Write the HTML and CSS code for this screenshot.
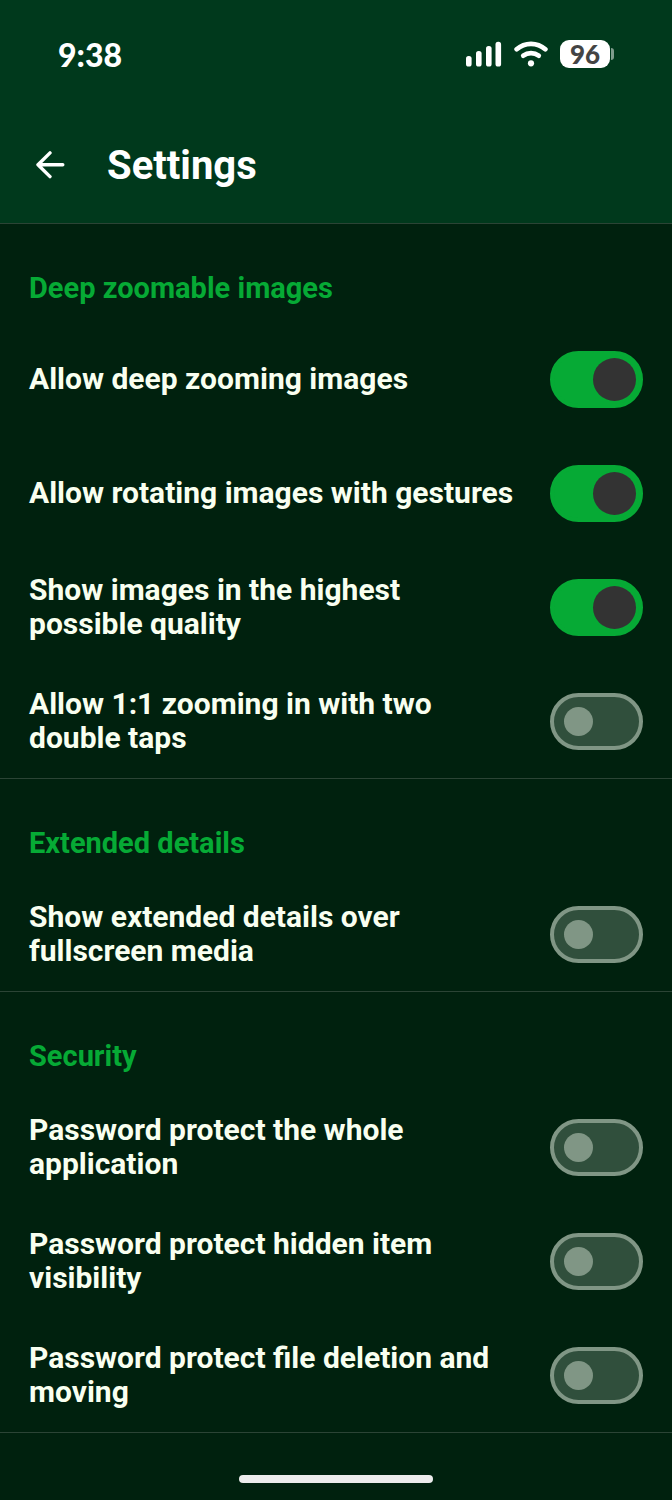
FILE: index.html
```
<!DOCTYPE html>
<html lang="en">
<head>
    <meta charset="UTF-8">
    <meta name="viewport" content="width=device-width, initial-scale=1.0">
    <title>Settings</title>
    <link rel="stylesheet" href="styles.css">
</head>
<body>
    <header class="header">
        <div class="status-bar">
            <span class="time">9:38</span>
            <div class="status-icons">
                <svg class="signal" width="36" height="26" viewBox="0 0 36 26" fill="#fff">
                    <rect x="0" y="15" width="5.6" height="10.5" rx="2.6"/>
                    <rect x="10" y="10" width="5.6" height="15.5" rx="2.6"/>
                    <rect x="20" y="5" width="5.6" height="20.5" rx="2.6"/>
                    <rect x="29.5" y="0.8" width="5.6" height="24.7" rx="2.6"/>
                </svg>
                <svg class="wifi" width="34" height="26" viewBox="0 0 34 26" fill="none" stroke="#fff" stroke-width="4.8" stroke-linecap="round">
                    <path d="M2.7 8.2C10.8 1 23.2 1 31.3 8.2"/>
                    <path d="M9.3 14.7c4.5-3.4 10.9-3.4 15.4 0"/>
                    <circle cx="17" cy="22.3" r="3.1" fill="#fff" stroke="none"/>
                </svg>
                <div class="battery">
                    <span class="battery-level">96</span>
                    <span class="battery-tip"></span>
                </div>
            </div>
        </div>
        <div class="toolbar">
            <button class="back-btn" aria-label="Back">
                <svg width="30" height="30" viewBox="0 0 30 30" fill="none" stroke="#fff" stroke-width="3.4" stroke-linecap="round" stroke-linejoin="round">
                    <path d="M15 1.9L3 13.7l12 11.9M3 13.7h24.8"/>
                </svg>
            </button>
            <h1>Settings</h1>
        </div>
    </header>

    <main>
        <section class="section">
            <h2>Deep zoomable images</h2>
            <div class="row">
                <label for="deep-zoom">Allow deep zooming images</label>
                <input type="checkbox" class="switch" id="deep-zoom" checked>
            </div>
            <div class="row">
                <label for="rotate">Allow rotating images with gestures</label>
                <input type="checkbox" class="switch" id="rotate" checked>
            </div>
            <div class="row">
                <label for="quality">Show images in the highest<br>possible quality</label>
                <input type="checkbox" class="switch" id="quality" checked>
            </div>
            <div class="row">
                <label for="one-to-one">Allow 1:1 zooming in with two<br>double taps</label>
                <input type="checkbox" class="switch" id="one-to-one">
            </div>
        </section>

        <section class="section">
            <h2>Extended details</h2>
            <div class="row">
                <label for="extended">Show extended details over<br>fullscreen media</label>
                <input type="checkbox" class="switch" id="extended">
            </div>
        </section>

        <section class="section">
            <h2>Security</h2>
            <div class="row">
                <label for="protect-app">Password protect the whole<br>application</label>
                <input type="checkbox" class="switch" id="protect-app">
            </div>
            <div class="row">
                <label for="protect-hidden">Password protect hidden item<br>visibility</label>
                <input type="checkbox" class="switch" id="protect-hidden">
            </div>
            <div class="row">
                <label for="protect-files">Password protect file deletion and<br>moving</label>
                <input type="checkbox" class="switch" id="protect-files">
            </div>
        </section>
    </main>

    <footer class="home-area">
        <div class="home-indicator"></div>
    </footer>
</body>
</html>
```
FILE: styles.css
```
* {
    box-sizing: border-box;
}

body {
    margin: 0;
    min-height: 100vh;
    display: flex;
    flex-direction: column;
    font-family: Roboto, sans-serif;
    background-color: #00210e;
    color: #f9fff0;
}

.header {
    background-color: #00391c;
    border-bottom: 1px solid #2b4435;
    color: #fff;
}

.status-bar {
    display: flex;
    align-items: center;
    justify-content: space-between;
    height: 108px;
    padding: 0 58px;
}

.time {
    font-family: Lato, sans-serif;
    font-size: 32px;
    font-weight: 900;
}

.status-icons {
    display: flex;
    align-items: center;
    gap: 12px;
}

.battery {
    display: flex;
    align-items: center;
    gap: 1px;
}

.battery-level {
    width: 50px;
    height: 28px;
    border-radius: 9px;
    background-color: #fff;
    color: #444;
    font-family: Lato, sans-serif;
    font-size: 26px;
    font-weight: 900;
    line-height: 28px;
    text-align: center;
}

.battery-tip {
    width: 3px;
    height: 12px;
    border-radius: 0 3px 3px 0;
    background-color: #7f9c8d;
}

.toolbar {
    display: flex;
    align-items: center;
    gap: 42px;
    height: 115px;
    padding: 0 35px;
}

.back-btn {
    display: flex;
    padding: 0;
    border: none;
    background: none;
    cursor: pointer;
}

h1 {
    margin: 0;
    font-size: 40px;
    font-weight: 700;
    line-height: 48px;
}

.section {
    padding: 0 29px;
    border-bottom: 1px solid #2b4435;
}

h2 {
    margin: 0;
    padding: 47px 0 17px;
    color: #06aa35;
    font-size: 29px;
    font-weight: 700;
    line-height: 34px;
}

.row {
    display: flex;
    align-items: center;
    justify-content: space-between;
    gap: 28px;
    height: 114px;
}

.row label {
    font-size: 30px;
    font-weight: 700;
    line-height: 34px;
}

.switch {
    appearance: none;
    display: flex;
    align-items: center;
    flex-shrink: 0;
    width: 93px;
    height: 57px;
    margin: 0;
    padding: 0 10px;
    border: 4px solid #809685;
    border-radius: 29px;
    background-color: #304f3c;
    cursor: pointer;
}

.switch::before {
    content: "";
    width: 29px;
    height: 29px;
    border-radius: 50%;
    background-color: #809685;
}

.switch:checked {
    justify-content: flex-end;
    padding: 0 3px;
    border-color: #06aa35;
    background-color: #06aa35;
}

.switch:checked::before {
    width: 43px;
    height: 43px;
    background-color: #333;
}

.home-area {
    display: flex;
    justify-content: center;
    margin-top: auto;
    padding-bottom: 17px;
}

.home-indicator {
    width: 29%;
    height: 8px;
    border-radius: 4px;
    background-color: #ececec;
}
```
